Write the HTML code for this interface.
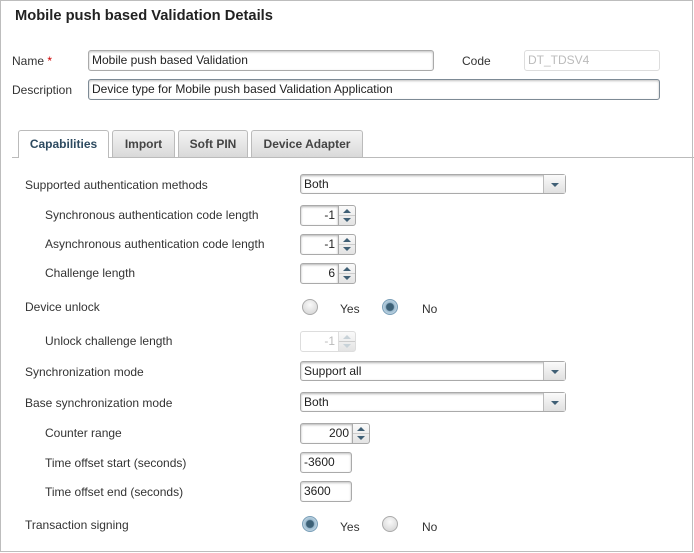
<!DOCTYPE html>
<html><head><style>
*{box-sizing:border-box;margin:0;padding:0}
body{width:694px;height:553px;background:#fff;font-family:"Liberation Sans",Arial,sans-serif;font-size:12px;color:#333;position:relative;overflow:hidden}
.frame{position:absolute;left:0;top:0;width:693px;height:552px;border:1px solid #bdbdbd}
.a{position:absolute;white-space:nowrap}
.inp{position:absolute;border:1px solid #aaa;border-radius:3px;background:#fff;box-shadow:inset 0 1px 2px rgba(0,0,0,.25);padding-left:3px;line-height:18px;color:#222}
.tab{position:absolute;top:130px;height:27px;border:1px solid #bbb;border-bottom:none;border-radius:3px 3px 0 0;background:linear-gradient(#f4f4f4,#d9d9d9);font-weight:bold;color:#444;text-align:center;line-height:27px}
.sel{position:absolute;left:300px;width:266px;height:20px;border:1px solid #aaa;border-radius:3px;background:#fff;box-shadow:inset 0 1px 2px rgba(0,0,0,.3);padding-left:3px;line-height:18px;color:#222}
.sel .b{position:absolute;right:0;top:0;width:22px;height:18px;border-left:1px solid #bbb;background:linear-gradient(#fafafa,#e0e0e0)}
.sel .b:after{content:"";position:absolute;left:7px;top:8px;border:4px solid transparent;border-top:4px solid #3f5f75;border-bottom:none}
.spin{position:absolute;left:300px;height:21px}
.spin .i{position:absolute;left:0;top:0;height:21px;border:1px solid #aaa;border-radius:3px 0 0 3px;box-shadow:inset 0 1px 2px rgba(0,0,0,.3);text-align:right;padding-right:3px;line-height:19px;color:#222;background:#fff}
.spin .bt{position:absolute;top:0;width:18px;height:21px;border:1px solid #aaa;border-radius:0 3px 3px 0;background:linear-gradient(#fafafa,#e3e3e3)}
.bt:before{content:"";position:absolute;left:4px;top:3px;border:4px solid transparent;border-bottom:4px solid #3f5f75;border-top:none}
.bt:after{content:"";position:absolute;left:4px;top:12px;border:4px solid transparent;border-top:4px solid #3f5f75;border-bottom:none}
.bt i{position:absolute;left:0;right:0;top:9px;border-top:1px solid #ccc}
.dis .i{color:#bbb;border-color:#ddd;box-shadow:none}
.dis .bt{border-color:#ddd}
.dis .bt:before{border-bottom-color:#c8d2d8}.dis .bt:after{border-top-color:#c8d2d8}
.r{position:absolute;width:16px;height:16px;border-radius:50%;border:1px solid #aaa;background:radial-gradient(circle at 50% 35%,#fafafa,#d0d0d0)}
.r.on{border-color:#7a9fb8;background:radial-gradient(circle,#3d6177 0 3.5px,#9dbcd1 4.5px,#c9dbe7 8px)}
</style></head><body>
<div class="frame"></div>
<div class="a" style="left:15px;top:8px;font-size:14.7px;font-weight:bold;color:#222">Mobile push based Validation Details</div>
<div class="a" style="left:12px;top:54px">Name<span style="color:#c00"> *</span></div>
<div class="inp" style="left:88px;top:50px;width:346px;height:21px">Mobile push based Validation</div>
<div class="a" style="left:462px;top:54px">Code</div>
<div class="inp" style="left:524px;top:50px;width:136px;height:21px;color:#bbb;border-color:#ddd;box-shadow:none">DT_TDSV4</div>
<div class="a" style="left:12px;top:83px">Description</div>
<div class="inp" style="left:88px;top:79px;width:572px;height:21px;border-color:#7d8a95">Device type for Mobile push based Validation Application</div>
<div class="a" style="left:12px;top:157px;width:682px;border-top:1px solid #bbb"></div>
<div class="tab" style="left:18px;width:91px;height:28px;background:#fff;color:#2d4a60">Capabilities</div>
<div class="tab" style="left:112px;width:63px">Import</div>
<div class="tab" style="left:178px;width:70px">Soft PIN</div>
<div class="tab" style="left:251px;width:112px">Device Adapter</div>

<div class="a" style="left:25px;top:178px">Supported authentication methods</div>
<div class="sel" style="top:174px">Both<div class="b"></div></div>
<div class="a" style="left:45px;top:208px">Synchronous authentication code length</div>
<div class="spin" style="top:205px"><div class="i" style="width:39px">-1</div><div class="bt" style="left:38px"><i></i></div></div>
<div class="a" style="left:45px;top:237px">Asynchronous authentication code length</div>
<div class="spin" style="top:234px"><div class="i" style="width:39px">-1</div><div class="bt" style="left:38px"><i></i></div></div>
<div class="a" style="left:45px;top:266px">Challenge length</div>
<div class="spin" style="top:263px"><div class="i" style="width:39px">6</div><div class="bt" style="left:38px"><i></i></div></div>
<div class="a" style="left:25px;top:300px">Device unlock</div>
<div class="r" style="left:302px;top:299px"></div><div class="a" style="left:340px;top:302px">Yes</div>
<div class="r on" style="left:382px;top:299px"></div><div class="a" style="left:422px;top:302px">No</div>
<div class="a" style="left:45px;top:334px">Unlock challenge length</div>
<div class="spin dis" style="top:331px"><div class="i" style="width:39px">-1</div><div class="bt" style="left:38px"><i></i></div></div>
<div class="a" style="left:25px;top:365px">Synchronization mode</div>
<div class="sel" style="top:361px">Support all<div class="b"></div></div>
<div class="a" style="left:25px;top:396px">Base synchronization mode</div>
<div class="sel" style="top:392px">Both<div class="b"></div></div>
<div class="a" style="left:45px;top:426px">Counter range</div>
<div class="spin" style="top:423px"><div class="i" style="width:53px">200</div><div class="bt" style="left:52px"><i></i></div></div>
<div class="a" style="left:45px;top:456px">Time offset start (seconds)</div>
<div class="inp" style="left:300px;top:452px;width:52px;height:21px">-3600</div>
<div class="a" style="left:45px;top:485px">Time offset end (seconds)</div>
<div class="inp" style="left:300px;top:481px;width:52px;height:21px">3600</div>
<div class="a" style="left:25px;top:518px">Transaction signing</div>
<div class="r on" style="left:302px;top:516px"></div><div class="a" style="left:340px;top:520px">Yes</div>
<div class="r" style="left:382px;top:516px"></div><div class="a" style="left:422px;top:520px">No</div>
</body></html>
